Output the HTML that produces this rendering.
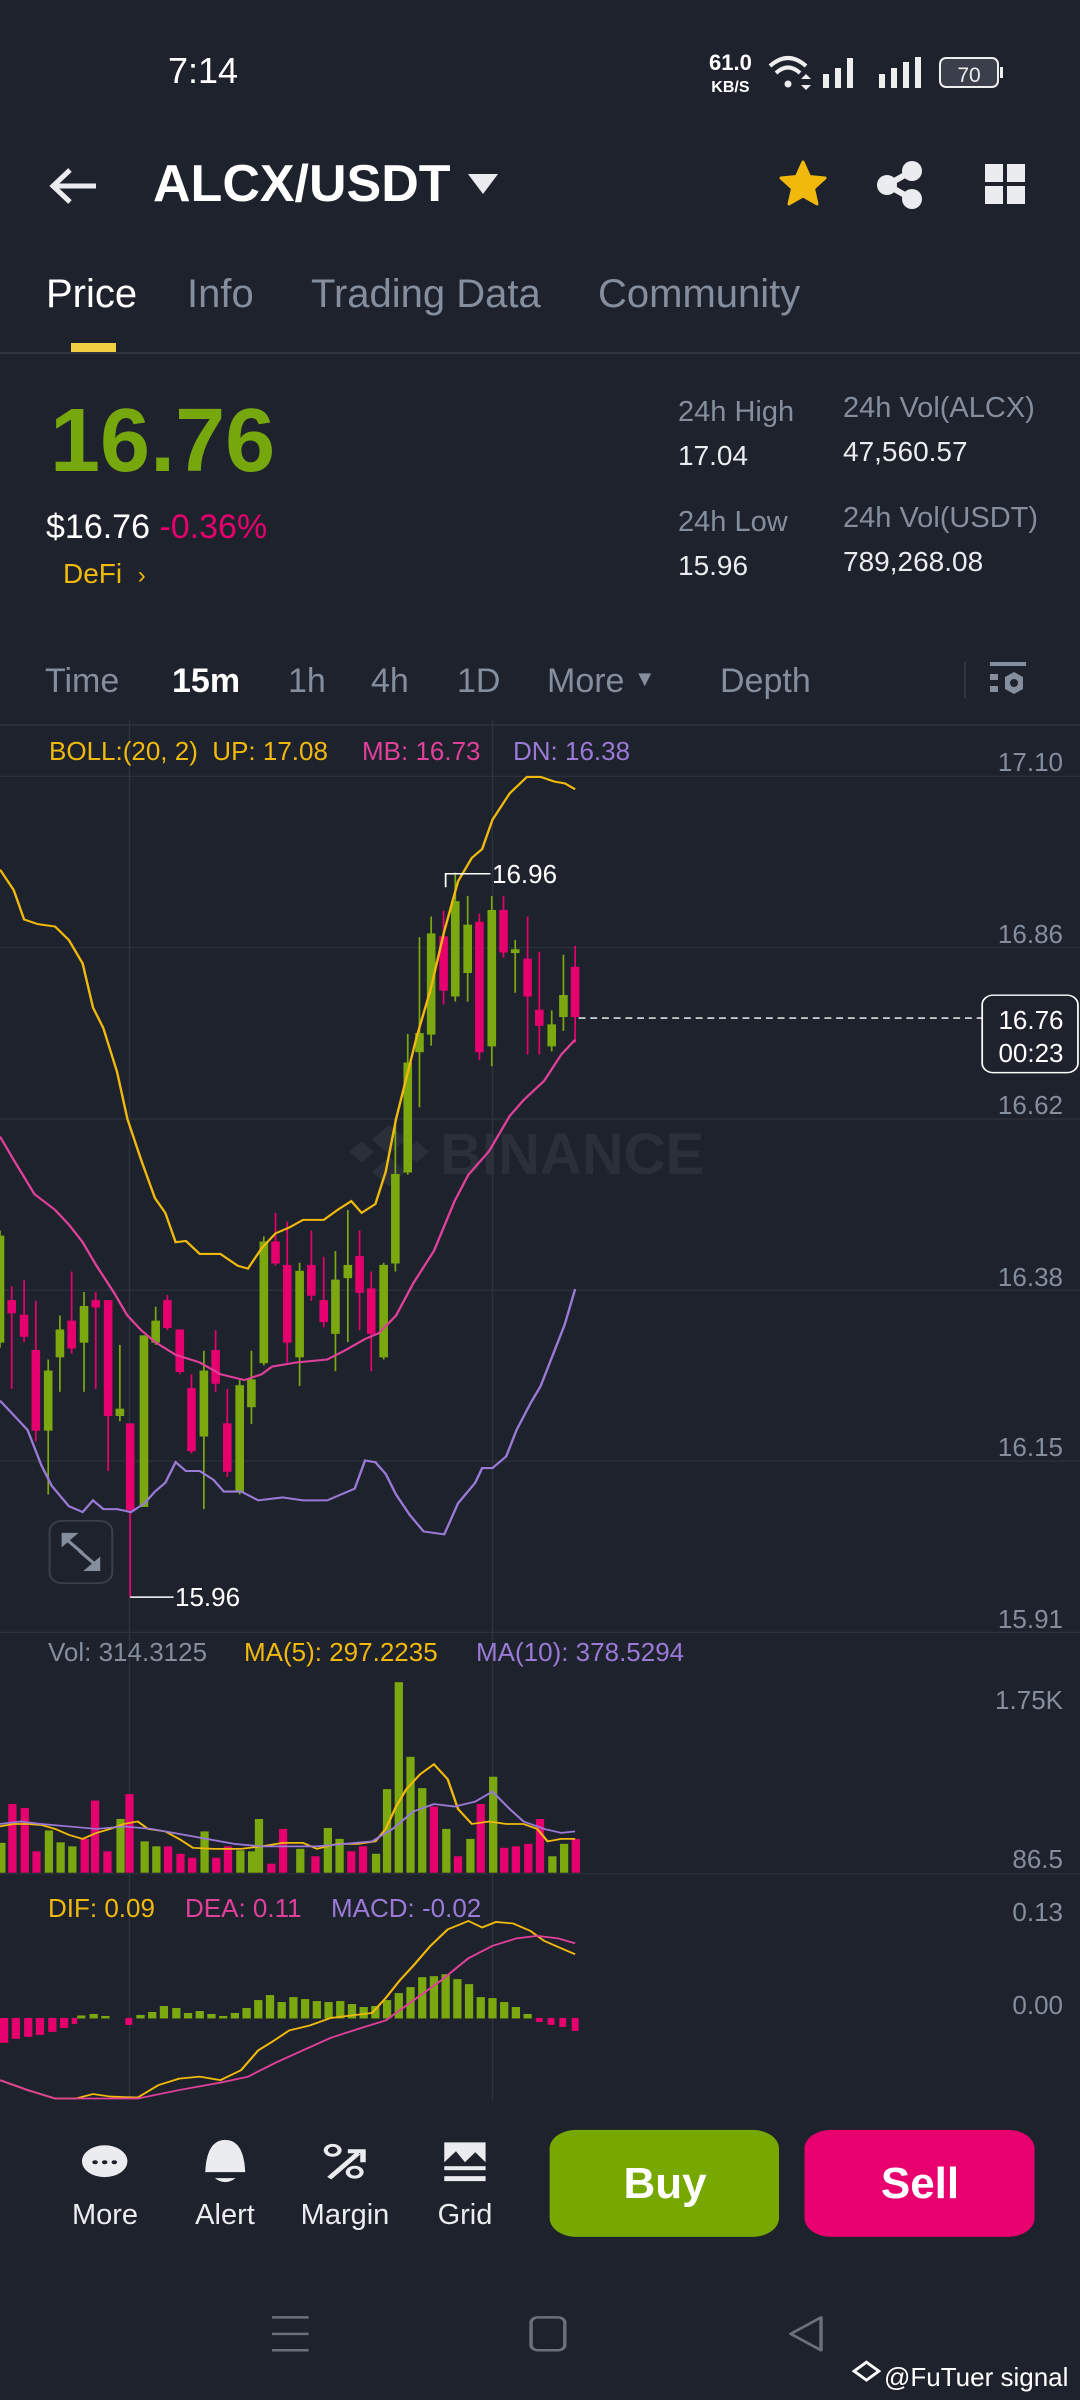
<!DOCTYPE html>
<html><head><meta charset="utf-8"><style>
*{margin:0;padding:0;box-sizing:border-box}
body{width:1080px;height:2400px;background:#1e222d;font-family:"Liberation Sans",sans-serif;color:#eaecef;position:relative;overflow:hidden}
.a{position:absolute;white-space:nowrap}
.g{color:#848e9c}
.t{position:absolute;white-space:nowrap;line-height:1}
.r{right:17px;font-size:26px;color:#848e9c}
</style></head><body>
<div class="a" style="left:168px;top:50px;font-size:36px;color:#fff">7:14</div>
<div class="a" style="left:709px;top:52px;font-size:22px;font-weight:bold;line-height:22px;color:#fff;text-align:center">61.0<br><span style="font-size:16px">KB/S</span></div>
<svg class="a" style="left:765px;top:50px" width="240" height="45" viewBox="765 50 240 45">
<path d="M770 66 Q788 50 806 66" stroke="#eee" stroke-width="4" fill="none"/><path d="M776 73 Q788 62 800 73" stroke="#eee" stroke-width="4" fill="none"/><circle cx="788" cy="84" r="3.5" fill="#eee"/>
<path d="M801 79 l5 -5 l5 5z M801 85 l5 5 l5 -5z" fill="#eee"/>
<rect x="823" y="74" width="6" height="14" fill="#eee"/><rect x="835" y="68" width="6" height="20" fill="#eee"/><rect x="847" y="58" width="6" height="30" fill="#eee"/>
<rect x="879" y="74" width="6" height="14" fill="#eee"/><rect x="891" y="68" width="6" height="20" fill="#eee"/><rect x="903" y="62" width="6" height="26" fill="#eee"/><rect x="915" y="57" width="6" height="31" fill="#eee"/>
<rect x="940" y="58" width="58" height="29" rx="6" fill="#3a3f4b" stroke="#eee" stroke-width="2"/><rect x="1000" y="67" width="3" height="11" fill="#eee"/>
<text x="969" y="82" font-size="21" fill="#eee" text-anchor="middle" font-family="Liberation Sans">70</text>
</svg>
<svg class="a" style="left:48px;top:166px" width="52" height="40" viewBox="0 0 52 40"><path d="M48 20H6M22 4L5 20L22 36" stroke="#eaecef" stroke-width="5" fill="none"/></svg>
<div class="a" style="left:153px;top:154px;font-size:52px;font-weight:bold;color:#fff">ALCX/USDT</div>
<svg class="a" style="left:468px;top:174px" width="30" height="22"><path d="M0 0H30L15 20Z" fill="#eaecef"/></svg>
<svg class="a" style="left:778px;top:160px" width="50" height="50" viewBox="-25 -25 50 50"><path d="M0 -23 L6.5 -8.5 L22 -7 L10.5 3.5 L14 19 L0 11 L-14 19 L-10.5 3.5 L-22 -7 L-6.5 -8.5Z" fill="#f0b90b" stroke="#f0b90b" stroke-width="3" stroke-linejoin="round"/></svg>
<svg class="a" style="left:876px;top:160px" width="48" height="50"><circle cx="36" cy="11" r="10" fill="#eaecef"/><circle cx="36" cy="39" r="10" fill="#eaecef"/><circle cx="11" cy="25" r="10" fill="#eaecef"/><path d="M36 11L11 25L36 39" stroke="#eaecef" stroke-width="6" fill="none"/></svg>
<svg class="a" style="left:985px;top:164px" width="42" height="42"><rect x="0" y="0" width="18" height="18" fill="#eaecef"/><rect x="22" y="0" width="18" height="18" fill="#eaecef"/><rect x="0" y="22" width="18" height="18" fill="#eaecef"/><rect x="22" y="22" width="18" height="18" fill="#eaecef"/></svg>
<div class="a" style="left:46px;top:272px;font-size:40px;color:#fff">Price</div>
<div class="a g" style="left:187px;top:272px;font-size:40px">Info</div>
<div class="a g" style="left:311px;top:272px;font-size:40px">Trading Data</div>
<div class="a g" style="left:598px;top:272px;font-size:40px">Community</div>
<div class="a" style="left:71px;top:343px;width:45px;height:9px;background:#f0d040"></div>
<div class="a" style="left:0;top:352px;width:1080px;height:2px;background:#2f3440"></div>
<div class="a" style="left:50px;top:390px;font-size:90px;font-weight:bold;color:#76a80e">16.76</div>
<div class="a" style="left:46px;top:508px;font-size:34px;color:#fff">$16.76 <span style="color:#e6006e">-0.36%</span></div>
<div class="a" style="left:63px;top:558px;font-size:28px;color:#f0b90b">DeFi &nbsp;<span style="font-size:24px">›</span></div>
<div class="a g" style="left:678px;top:396px;font-size:29px">24h High</div>
<div class="a" style="left:678px;top:440px;font-size:28px">17.04</div>
<div class="a g" style="left:843px;top:392px;font-size:29px">24h Vol(ALCX)</div>
<div class="a" style="left:843px;top:436px;font-size:28px">47,560.57</div>
<div class="a g" style="left:678px;top:506px;font-size:29px">24h Low</div>
<div class="a" style="left:678px;top:550px;font-size:28px">15.96</div>
<div class="a g" style="left:843px;top:502px;font-size:29px">24h Vol(USDT)</div>
<div class="a" style="left:843px;top:546px;font-size:28px">789,268.08</div>
<div class="a g" style="left:45px;top:662px;font-size:34px">Time</div>
<div class="a" style="left:172px;top:662px;font-size:34px;color:#fff;font-weight:bold">15m</div>
<div class="a g" style="left:288px;top:662px;font-size:34px">1h</div>
<div class="a g" style="left:371px;top:662px;font-size:34px">4h</div>
<div class="a g" style="left:457px;top:662px;font-size:34px">1D</div>
<div class="a g" style="left:547px;top:662px;font-size:34px">More <span style="font-size:22px;vertical-align:6px">▼</span></div>
<div class="a g" style="left:720px;top:662px;font-size:34px">Depth</div>
<div class="a" style="left:964px;top:662px;width:2px;height:36px;background:#2f3440"></div>
<svg class="a" style="left:990px;top:662px" width="36" height="36"><rect x="0" y="0" width="36" height="4" fill="#848e9c"/><rect x="0" y="12" width="8" height="6" fill="#848e9c"/><rect x="0" y="24" width="8" height="6" fill="#848e9c"/><path d="M24 10 L33 15 L33 27 L24 32 L15 27 L15 15Z" fill="#848e9c"/><circle cx="24" cy="21" r="4" fill="#1e222d"/></svg>
<div class="a" style="left:0;top:724px;width:1080px;height:2px;background:#2a2f3a"></div>

<div class="t" style="left:440px;top:1126px;font-size:58px;font-weight:bold;color:#2a2f3a">BINANCE</div>

<svg class="a" style="left:0;top:720px" width="1080" height="920" viewBox="0 0 1568 1568" preserveAspectRatio="none">
<g stroke="#2d323d" stroke-width="2"><line x1="0" y1="96" x2="1568" y2="96"/><line x1="0" y1="388" x2="1568" y2="388"/><line x1="0" y1="680" x2="1568" y2="680"/><line x1="0" y1="972" x2="1568" y2="972"/><line x1="0" y1="1263" x2="1568" y2="1263"/><line x1="0" y1="1555" x2="1568" y2="1555"/><line x1="188" y1="0" x2="188" y2="1568"/><line x1="715" y1="0" x2="715" y2="1568"/></g>
<path d="M565 690 l25 25 l-25 25 l-25 -25z M565 745 l25 25 l-25 25 l-25 -25z M525 718 l18 18 l-18 18 l-18 -18z M605 718 l18 18 l-18 18 l-18 -18z" fill="#2a2f3a"/>
<g stroke-width="2.5">
<g stroke="#7aa80e" fill="#7aa80e">
<line x1="0" y1="870" x2="0" y2="1070"/><rect x="-4" y="880" width="9" height="180"/>
<line x1="70" y1="1090" x2="70" y2="1320"/><rect x="65" y="1110" width="10" height="100"/>
<line x1="87" y1="1015" x2="87" y2="1145"/><rect x="82" y="1040" width="10" height="45"/>
<line x1="122" y1="975" x2="122" y2="1145"/><rect x="117" y="1000" width="10" height="60"/>
<line x1="174" y1="1065" x2="174" y2="1195"/><rect x="169" y="1175" width="10" height="10"/>
<line x1="209" y1="1050" x2="209" y2="1340"/><rect x="204" y="1050" width="10" height="290"/>
<line x1="226" y1="1000" x2="226" y2="1065"/><rect x="221" y="1025" width="10" height="35"/>
<line x1="296" y1="1075" x2="296" y2="1345"/><rect x="291" y="1110" width="10" height="110"/>
<line x1="348" y1="1125" x2="348" y2="1320"/><rect x="343" y="1135" width="10" height="180"/>
<line x1="365" y1="1075" x2="365" y2="1200"/><rect x="360" y="1125" width="10" height="45"/>
<line x1="383" y1="880" x2="383" y2="1100"/><rect x="378" y="890" width="10" height="205"/>
<line x1="435" y1="925" x2="435" y2="1135"/><rect x="430" y="940" width="10" height="145"/>
<line x1="487" y1="905" x2="487" y2="1110"/><rect x="482" y="955" width="10" height="90"/>
<line x1="505" y1="835" x2="505" y2="1060"/><rect x="500" y="930" width="10" height="20"/>
<line x1="557" y1="925" x2="557" y2="1090"/><rect x="552" y="930" width="10" height="155"/>
<line x1="574" y1="680" x2="574" y2="940"/><rect x="569" y="775" width="10" height="150"/>
<line x1="592" y1="535" x2="592" y2="775"/><rect x="587" y="585" width="10" height="185"/>
<line x1="609" y1="370" x2="609" y2="660"/><rect x="604" y="535" width="10" height="30"/>
<line x1="626" y1="335" x2="626" y2="555"/><rect x="621" y="365" width="10" height="170"/>
<line x1="661" y1="260" x2="661" y2="480"/><rect x="656" y="310" width="10" height="160"/>
<line x1="679" y1="300" x2="679" y2="480"/><rect x="674" y="350" width="10" height="80"/>
<line x1="714" y1="300" x2="714" y2="590"/><rect x="709" y="325" width="10" height="230"/>
<line x1="748" y1="375" x2="748" y2="465"/><rect x="743" y="392" width="10" height="4"/>
<line x1="801" y1="495" x2="801" y2="565"/><rect x="796" y="520" width="10" height="35"/>
<line x1="818" y1="400" x2="818" y2="530"/><rect x="813" y="470" width="10" height="35"/>
</g>
<g stroke="#e6006e" fill="#e6006e">
<line x1="17" y1="965" x2="17" y2="1140"/><rect x="12" y="990" width="10" height="20"/>
<line x1="35" y1="955" x2="35" y2="1060"/><rect x="30" y="1015" width="10" height="35"/>
<line x1="52" y1="990" x2="52" y2="1230"/><rect x="47" y="1075" width="10" height="135"/>
<line x1="104" y1="940" x2="104" y2="1080"/><rect x="99" y="1025" width="10" height="45"/>
<line x1="139" y1="975" x2="139" y2="1140"/><rect x="134" y="990" width="10" height="10"/>
<line x1="157" y1="990" x2="157" y2="1280"/><rect x="152" y="990" width="10" height="195"/>
<line x1="189" y1="1200" x2="189" y2="1495"/><rect x="184" y="1200" width="10" height="145"/>
<line x1="243" y1="980" x2="243" y2="1040"/><rect x="238" y="990" width="10" height="45"/>
<line x1="261" y1="1040" x2="261" y2="1115"/><rect x="256" y="1040" width="10" height="70"/>
<line x1="278" y1="1115" x2="278" y2="1250"/><rect x="273" y="1140" width="10" height="105"/>
<line x1="313" y1="1040" x2="313" y2="1145"/><rect x="308" y="1075" width="10" height="55"/>
<line x1="330" y1="1140" x2="330" y2="1290"/><rect x="325" y="1200" width="10" height="80"/>
<line x1="400" y1="840" x2="400" y2="930"/><rect x="395" y="890" width="10" height="35"/>
<line x1="417" y1="855" x2="417" y2="1095"/><rect x="412" y="930" width="10" height="130"/>
<line x1="452" y1="870" x2="452" y2="990"/><rect x="447" y="930" width="10" height="50"/>
<line x1="470" y1="915" x2="470" y2="1035"/><rect x="465" y="990" width="10" height="35"/>
<line x1="522" y1="870" x2="522" y2="1040"/><rect x="517" y="915" width="10" height="60"/>
<line x1="539" y1="940" x2="539" y2="1110"/><rect x="534" y="970" width="10" height="75"/>
<line x1="644" y1="325" x2="644" y2="485"/><rect x="639" y="370" width="10" height="90"/>
<line x1="696" y1="330" x2="696" y2="580"/><rect x="691" y="345" width="10" height="220"/>
<line x1="731" y1="300" x2="731" y2="405"/><rect x="726" y="325" width="10" height="70"/>
<line x1="766" y1="335" x2="766" y2="570"/><rect x="761" y="408" width="10" height="62"/>
<line x1="783" y1="395" x2="783" y2="570"/><rect x="778" y="495" width="10" height="25"/>
<line x1="835" y1="385" x2="835" y2="550"/><rect x="830" y="422" width="10" height="83"/>
</g></g>
<g fill="none" stroke-width="3.5">
<polyline stroke="#f0b90b" points="0,255 20,290 35,340 55,348 80,352 100,375 120,415 135,490 150,525 170,600 185,680 205,750 225,815 240,840 255,890 270,888 290,910 320,910 345,930 360,935 380,900 400,875 420,865 440,852 470,852 490,835 510,820 525,840 545,825 560,770 575,680 590,610 605,540 625,460 645,360 665,275 685,235 700,220 715,170 740,125 765,97 785,97 805,105 820,108 835,118"/>
<polyline stroke="#e0409a" points="0,710 20,750 50,808 80,835 100,860 120,890 140,930 165,975 185,1015 205,1040 225,1060 255,1082 290,1095 320,1115 355,1125 380,1115 395,1102 430,1095 475,1090 500,1075 530,1055 550,1045 575,1015 600,960 630,905 660,820 680,775 710,735 740,675 760,648 790,615 815,570 835,545"/>
<polyline stroke="#9a7ad6" points="0,1160 20,1185 40,1210 60,1270 75,1305 100,1340 120,1350 135,1330 150,1345 170,1345 190,1350 210,1335 225,1315 240,1300 255,1265 270,1280 290,1280 310,1295 325,1315 350,1315 375,1330 410,1325 440,1330 475,1330 495,1320 515,1310 530,1262 545,1265 560,1285 575,1320 595,1355 615,1383 645,1388 665,1335 690,1300 700,1275 715,1275 735,1255 750,1210 770,1165 785,1135 800,1090 820,1030 835,970"/>
</g>
<path d="M647 285 V262 H712" stroke="#fff" stroke-width="2.5" fill="none"/>
<path d="M189 1495 H252" stroke="#fff" stroke-width="2.5"/>
<line x1="840" y1="508" x2="1425" y2="508" stroke="#fff" stroke-width="2.5" stroke-dasharray="10 7"/>
<rect x="1426" y="469" width="139" height="132" rx="16" fill="#1e222d" stroke="#fff" stroke-width="2.5"/>
<rect x="72" y="1365" width="91" height="106" rx="18" fill="none" stroke="#3a3f4a" stroke-width="3"/>
<path d="M92 1388 L108 1388 L92 1404Z M92 1392 L120 1420 M143 1448 L127 1448 L143 1432Z M143 1444 L115 1416" stroke="#848e9c" fill="#848e9c" stroke-width="5"/>
</svg>

<div class="t" style="left:49px;top:738px;font-size:26px;color:#f0b90b">BOLL:(20, 2)&nbsp;&nbsp;UP: 17.08</div>
<div class="t" style="left:362px;top:738px;font-size:26px;color:#e0409a">MB: 16.73</div>
<div class="t" style="left:513px;top:738px;font-size:26px;color:#9a7ad6">DN: 16.38</div>
<div class="t r" style="top:749px">17.10</div>
<div class="t r" style="top:921px">16.86</div>
<div class="t r" style="top:1092px">16.62</div>
<div class="t r" style="top:1264px">16.38</div>
<div class="t r" style="top:1434px">16.15</div>
<div class="t r" style="top:1606px">15.91</div>
<div class="t" style="left:492px;top:861px;font-size:26px;color:#fff">16.96</div>
<div class="t" style="left:175px;top:1584px;font-size:26px;color:#fff">15.96</div>
<div class="t" style="left:981px;top:1007px;width:100px;text-align:center;font-size:26px;color:#fff">16.76</div>
<div class="t" style="left:981px;top:1040px;width:100px;text-align:center;font-size:26px;color:#fff">00:23</div>

<svg class="a" style="left:0;top:1620px" width="1080" height="780" viewBox="0 0 1568 1568" preserveAspectRatio="none">
<g stroke="#2d323d" stroke-width="2"><line x1="0" y1="25" x2="1568" y2="25"/><line x1="0" y1="510" x2="1568" y2="510"/><line x1="188" y1="25" x2="188" y2="965"/><line x1="715" y1="25" x2="715" y2="965"/></g>
<g fill="#7aa80e"><rect x="-4" y="448" width="12" height="60"/><rect x="65" y="423" width="12" height="85"/><rect x="82" y="447" width="12" height="61"/><rect x="99" y="455" width="12" height="53"/><rect x="169" y="400" width="12" height="108"/><rect x="204" y="445" width="12" height="63"/><rect x="221" y="455" width="12" height="53"/><rect x="291" y="425" width="12" height="83"/><rect x="343" y="463" width="12" height="45"/><rect x="360" y="465" width="12" height="43"/><rect x="370" y="400" width="12" height="108"/><rect x="430" y="460" width="12" height="48"/><rect x="470" y="418" width="12" height="90"/><rect x="487" y="440" width="12" height="68"/><rect x="540" y="470" width="12" height="38"/><rect x="556" y="340" width="12" height="168"/><rect x="573" y="125" width="12" height="383"/><rect x="590" y="275" width="12" height="233"/><rect x="607" y="338" width="12" height="170"/><rect x="642" y="420" width="12" height="88"/><rect x="677" y="440" width="12" height="68"/><rect x="710" y="315" width="12" height="193"/><rect x="796" y="475" width="12" height="33"/><rect x="813" y="450" width="12" height="58"/></g>
<g fill="#e6006e"><rect x="12" y="370" width="12" height="138"/><rect x="30" y="378" width="12" height="130"/><rect x="47" y="465" width="12" height="43"/><rect x="117" y="440" width="12" height="68"/><rect x="132" y="363" width="12" height="145"/><rect x="150" y="465" width="12" height="43"/><rect x="182" y="350" width="12" height="158"/><rect x="238" y="455" width="12" height="53"/><rect x="256" y="470" width="12" height="38"/><rect x="273" y="478" width="12" height="30"/><rect x="308" y="478" width="12" height="30"/><rect x="325" y="455" width="12" height="53"/><rect x="388" y="490" width="12" height="18"/><rect x="405" y="420" width="12" height="88"/><rect x="452" y="475" width="12" height="33"/><rect x="504" y="465" width="12" height="43"/><rect x="521" y="455" width="12" height="53"/><rect x="624" y="375" width="12" height="133"/><rect x="659" y="475" width="12" height="33"/><rect x="692" y="370" width="12" height="138"/><rect x="726" y="458" width="12" height="50"/><rect x="743" y="455" width="12" height="53"/><rect x="761" y="450" width="12" height="58"/><rect x="778" y="400" width="12" height="108"/><rect x="830" y="440" width="12" height="68"/></g>
<g fill="none" stroke-width="3.5">
<polyline stroke="#f0b90b" points="0,415 20,410 40,410 60,412 80,420 100,432 120,440 140,428 160,420 180,410 200,405 215,420 240,425 260,440 280,458 310,460 350,460 380,455 410,448 440,448 460,460 490,450 520,450 545,445 560,420 575,375 590,340 610,310 630,290 650,320 665,380 685,410 710,405 735,410 760,410 780,420 795,445 815,440 835,440"/>
<polyline stroke="#9a7ad6" points="0,410 30,405 60,410 100,415 140,420 180,415 220,420 260,430 300,440 340,450 380,455 420,455 460,455 500,450 540,445 570,420 600,385 630,370 660,375 690,365 715,345 740,380 760,405 790,420 815,428 835,425"/>
</g>
<g fill="#e6006e"><rect x="0" y="800" width="12" height="50"/><rect x="17" y="800" width="12" height="42"/><rect x="35" y="800" width="12" height="38"/><rect x="52" y="800" width="12" height="34"/><rect x="70" y="800" width="12" height="28"/><rect x="87" y="800" width="12" height="20"/><rect x="104" y="800" width="8" height="12"/><rect x="182" y="800" width="10" height="14"/><rect x="778" y="800" width="10" height="8"/><rect x="795" y="800" width="10" height="14"/><rect x="812" y="800" width="10" height="18"/><rect x="830" y="800" width="10" height="26"/></g>
<g fill="#7aa80e"><rect x="112" y="795" width="12" height="6"/><rect x="130" y="792" width="12" height="9"/><rect x="147" y="796" width="12" height="5"/><rect x="198" y="794" width="12" height="7"/><rect x="215" y="788" width="12" height="13"/><rect x="232" y="776" width="12" height="25"/><rect x="250" y="780" width="12" height="21"/><rect x="267" y="790" width="12" height="11"/><rect x="284" y="786" width="12" height="15"/><rect x="301" y="792" width="12" height="9"/><rect x="318" y="796" width="12" height="5"/><rect x="335" y="790" width="12" height="11"/><rect x="352" y="780" width="12" height="21"/><rect x="369" y="764" width="12" height="37"/><rect x="386" y="754" width="12" height="47"/><rect x="403" y="768" width="12" height="33"/><rect x="420" y="758" width="12" height="43"/><rect x="437" y="762" width="12" height="39"/><rect x="454" y="766" width="12" height="35"/><rect x="471" y="768" width="12" height="33"/><rect x="488" y="766" width="12" height="35"/><rect x="505" y="772" width="12" height="29"/><rect x="522" y="778" width="12" height="23"/><rect x="539" y="776" width="12" height="25"/><rect x="556" y="764" width="12" height="37"/><rect x="573" y="750" width="12" height="51"/><rect x="590" y="738" width="12" height="63"/><rect x="607" y="718" width="12" height="83"/><rect x="624" y="716" width="12" height="85"/><rect x="641" y="712" width="12" height="89"/><rect x="658" y="722" width="12" height="79"/><rect x="675" y="732" width="12" height="69"/><rect x="692" y="758" width="12" height="43"/><rect x="709" y="760" width="12" height="41"/><rect x="726" y="768" width="12" height="33"/><rect x="743" y="778" width="12" height="23"/><rect x="760" y="792" width="12" height="9"/></g>
<g fill="none" stroke-width="3.5">
<polyline stroke="#f0b90b" points="0,925 40,945 80,962 110,962 135,953 160,958 200,960 230,935 260,922 290,918 320,925 350,905 375,865 395,848 420,825 450,815 480,800 510,795 540,790 560,760 580,725 600,695 625,655 650,622 680,605 700,618 720,607 745,610 770,625 790,645 815,660 835,672"/>
<polyline stroke="#e0409a" points="0,925 40,945 80,962 200,962 260,945 320,930 360,918 400,890 440,865 480,840 520,822 560,805 600,765 640,725 680,680 715,655 750,640 780,635 810,640 835,650"/>
</g>
<ellipse cx="152" cy="1088" rx="33" ry="32" fill="#eaecef"/><circle cx="138" cy="1090" r="4" fill="#1e222d"/><circle cx="152" cy="1090" r="4" fill="#1e222d"/><circle cx="166" cy="1090" r="4" fill="#1e222d"/>
<path d="M298 1110 Q300 1045 327 1045 Q354 1045 356 1110Z" fill="#eaecef"/><path d="M312 1122 Q327 1138 342 1122Z" fill="#eaecef"/>
<path d="M478 1122 L520 1072 M505 1068 H527 V1090" stroke="#eaecef" stroke-width="8" fill="none"/><circle cx="483" cy="1066" r="10" fill="none" stroke="#eaecef" stroke-width="6"/><circle cx="515" cy="1110" r="10" fill="none" stroke="#eaecef" stroke-width="6"/>
<path d="M645 1050 H705 V1090 L690 1070 L675 1090 L662 1068 L645 1090Z" fill="#eaecef"/><rect x="645" y="1098" width="60" height="8" fill="#eaecef"/><rect x="645" y="1118" width="60" height="10" fill="#eaecef"/>
<rect x="798" y="1025" width="333" height="215" rx="38" fill="#76a800"/>
<rect x="1168" y="1025" width="334" height="215" rx="38" fill="#e8006f"/>
<g stroke="#6a707c" stroke-width="5" fill="none"><path d="M395 1402H448M395 1435H448M395 1468H448"/><rect x="771" y="1402" width="49" height="66" rx="10"/><path d="M1192 1402 L1148 1435 L1192 1468Z" stroke-linejoin="round"/></g>
<path d="M1258 1492 l18 18 l-18 18 l-18 -18z" fill="none" stroke="#fff" stroke-width="5"/>
</svg>

<div class="t" style="left:48px;top:1639px;font-size:26px;color:#848e9c">Vol: 314.3125</div>
<div class="t" style="left:244px;top:1639px;font-size:26px;color:#f0b90b">MA(5): 297.2235</div>
<div class="t" style="left:476px;top:1639px;font-size:26px;color:#9a7ad6">MA(10): 378.5294</div>
<div class="t r" style="top:1687px">1.75K</div>
<div class="t r" style="top:1846px">86.5</div>
<div class="t" style="left:48px;top:1895px;font-size:26px;color:#f0b90b">DIF: 0.09</div>
<div class="t" style="left:185px;top:1895px;font-size:26px;color:#e0409a">DEA: 0.11</div>
<div class="t" style="left:331px;top:1895px;font-size:26px;color:#9a7ad6">MACD: -0.02</div>
<div class="t r" style="top:1899px">0.13</div>
<div class="t r" style="top:1992px">0.00</div>
<div class="t" style="left:45px;top:2201px;width:120px;text-align:center;font-size:29px">More</div>
<div class="t" style="left:165px;top:2201px;width:120px;text-align:center;font-size:29px">Alert</div>
<div class="t" style="left:285px;top:2201px;width:120px;text-align:center;font-size:29px">Margin</div>
<div class="t" style="left:405px;top:2201px;width:120px;text-align:center;font-size:29px">Grid</div>
<div class="t" style="left:550px;top:2162px;width:230px;text-align:center;font-size:44px;font-weight:bold;color:#fff">Buy</div>
<div class="t" style="left:805px;top:2162px;width:230px;text-align:center;font-size:44px;font-weight:bold;color:#fff">Sell</div>
<div class="t" style="left:884px;top:2364px;font-size:26px;color:#fff">@FuTuer signal</div>
</body></html>
